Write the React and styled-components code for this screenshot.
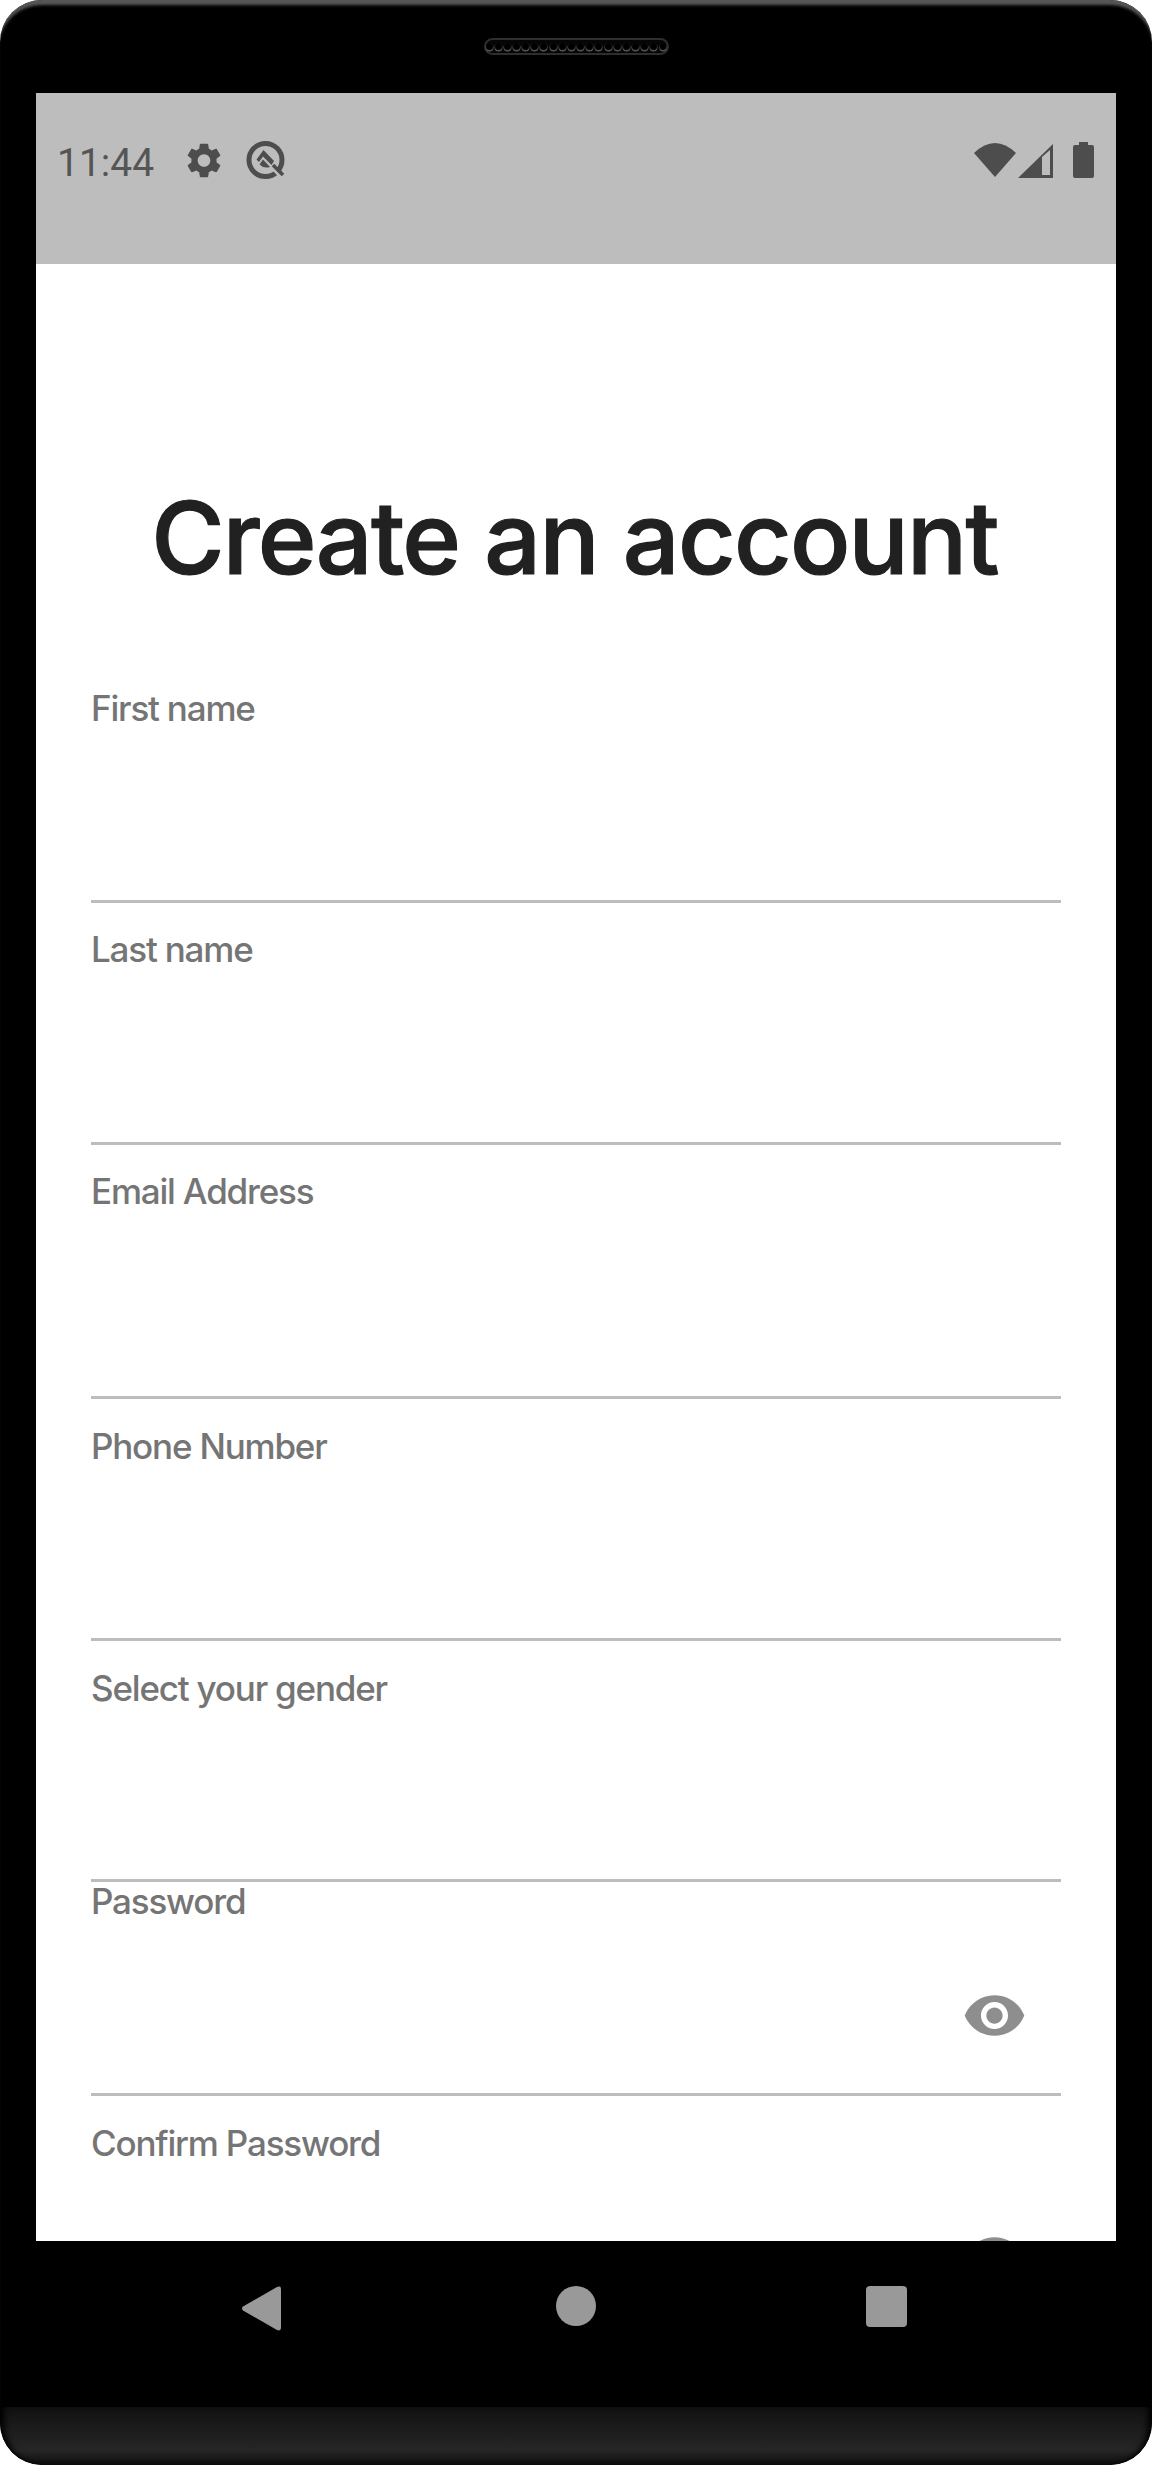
import React from 'react';
import styled, { createGlobalStyle } from 'styled-components';

const Global = createGlobalStyle`
  html, body { margin: 0; padding: 0; background: #fff; }
  #root { width: 1152px; height: 2465px; }
`;

const Device = styled.div`
  width: 1152px;
  height: 2465px;
  background: #000;
  border-radius: 42px;
  box-shadow: inset 0 7px 3px -2px #565656;
  display: flex;
  flex-direction: column;
  overflow: hidden;
`;
const TopBezel = styled.div`
  height: 93px;
  flex: none;
  display: flex;
  justify-content: center;
  padding-top: 38px;
  box-sizing: border-box;
`;
const Speaker = styled.div`
  width: 185px;
  height: 17px;
  box-sizing: border-box;
  border: 2px solid #2e2e2e;
  border-radius: 9px;
  background: #060606;
  display: flex;
  align-items: center;
  justify-content: center;
  gap: 2.2px;
`;
const SpeakerHole = styled.span`
  width: 7px;
  height: 7px;
  border-radius: 50%;
  background: #000;
  box-shadow: 0 1px 0 0.5px #555;
`;
const ScreenRow = styled.div`
  height: 2148px;
  flex: none;
  padding: 0 36px;
`;
const Screen = styled.div`
  height: 100%;
  background: #fff;
  overflow: hidden;
`;
const StatusBar = styled.div`
  height: 171px;
  background: #bdbdbd;
  display: flex;
  align-items: flex-start;
  padding: 47px 22px 0 21px;
  box-sizing: border-box;
  color: #4d4d4d;
`;
const Time = styled.span`
  font: 400 39px/46px Roboto, sans-serif;
  color: #555;
  width: 130px;
  flex: none;
`;
const Spacer = styled.div`
  flex: 1;
`;
const StatusIcon = styled.svg`
  display: block;
  flex: none;
  margin-left: ${p => p.$ml || 0}px;
  margin-top: ${p => p.$mt || 0}px;
  fill: #4d4d4d;
`;
const Content = styled.div`
  padding: 0 55px;
`;
const Title = styled.h1`
  margin: 0;
  padding: 214px 3px 63px 0;
  text-align: center;
  font: 500 100px/120px Inter, "Liberation Sans", sans-serif;
  letter-spacing: -1.7px;
  -webkit-text-stroke: 1.2px #212121;
  color: #212121;
  white-space: nowrap;
`;
const Field = styled.div`
  height: ${p => p.$h}px;
  border-bottom: 3px solid #bdbdbd;
  display: flex;
  flex-direction: column;
  padding-top: ${p => p.$pt}px;
  box-sizing: border-box;
`;
const Label = styled.label`
  font: 500 35px/38px Inter, "Liberation Sans", sans-serif;
  letter-spacing: -1.2px;
  color: #757575;
`;
const InputRow = styled.div`
  display: flex;
  flex: 1;
  align-items: center;
  justify-content: flex-end;
  padding: 18px 34px 0 0;
`;
const Eye = styled.svg`
  display: block;
  width: 65px;
  height: 65px;
  flex: none;
  fill: #8e8e8e;
`;
const NavBar = styled.div`
  height: 166px;
  flex: none;
  display: flex;
  align-items: flex-start;
  padding: 45px 0 0 242px;
  box-sizing: border-box;
`;
const NavIcon = styled.svg`
  display: block;
  flex: none;
  margin-left: ${p => p.$ml || 0}px;
  fill: #999;
`;
const Chin = styled.div`
  flex: 1;
  border-radius: 0 0 42px 42px;
  background: linear-gradient(#111 0%, #1c1c1c 40%, #262626 75%, #0c0c0c 100%);
  box-shadow: inset 8px 0 6px -4px #000, inset -8px 0 6px -4px #000;
`;

const eyePath = 'M12 4.5C7 4.5 2.73 7.61 1 12c1.73 4.39 6 7.5 11 7.5s9.27-3.11 11-7.5c-1.73-4.39-6-7.5-11-7.5zM12 17c-2.76 0-5-2.24-5-5s2.24-5 5-5 5 2.24 5 5-2.24 5-5 5zm0-8c-1.66 0-3 1.34-3 3s1.34 3 3 3 3-1.34 3-3-1.34-3-3-3z';
const EyeIcon = () => (
  <Eye viewBox="0 0 24 24"><path d={eyePath} /></Eye>
);

const fields = [
  { label: 'First name', h: 242, pt: 28 },
  { label: 'Last name', h: 242, pt: 27 },
  { label: 'Email Address', h: 254, pt: 27 },
  { label: 'Phone Number', h: 242, pt: 28 },
  { label: 'Select your gender', h: 241, pt: 28 },
  { label: 'Password', h: 214, pt: 0, eye: true },
  { label: 'Confirm Password', h: 242, pt: 28, eye: true },
];

export default function App() {
  return (
    <Device>
      <Global />
      <TopBezel>
        <Speaker>
          {Array.from({ length: 20 }, (_, i) => <SpeakerHole key={i} />)}
        </Speaker>
      </TopBezel>
      <ScreenRow>
        <Screen>
          <StatusBar>
            <Time>11:44</Time>
            <StatusIcon width="34" height="35" viewBox="2.6 2 18.8 20" $mt="3">
              <path d="M19.14 12.94c.04-.3.06-.61.06-.94 0-.32-.02-.64-.07-.94l2.03-1.58c.18-.14.23-.41.12-.61l-1.92-3.32c-.12-.22-.37-.29-.59-.22l-2.39.96c-.5-.38-1.03-.7-1.62-.94l-.36-2.54c-.04-.24-.24-.41-.48-.41h-3.84c-.24 0-.43.17-.47.41l-.36 2.54c-.59.24-1.13.57-1.62.94l-2.39-.96c-.22-.08-.47 0-.59.22L2.74 8.87c-.12.21-.08.47.12.61l2.03 1.58c-.05.3-.09.63-.09.94s.02.64.07.94l-2.03 1.58c-.18.14-.23.41-.12.61l1.92 3.32c.12.22.37.29.59.22l2.39-.96c.5.38 1.03.7 1.62.94l.36 2.54c.05.24.24.41.48.41h3.84c.24 0 .44-.17.47-.41l.36-2.54c.59-.24 1.13-.56 1.62-.94l2.39.96c.22.08.47 0 .59-.22l1.92-3.32c.12-.22.07-.47-.12-.61l-2.01-1.58zM12 15.6c-1.98 0-3.6-1.62-3.6-3.6s1.62-3.6 3.6-3.6 3.6 1.62 3.6 3.6-1.62 3.6-3.6 3.6z" />
            </StatusIcon>
            <StatusIcon width="39" height="38" viewBox="0 0 39 38" $ml="25" $mt="1">
              <circle cx="19.5" cy="19" r="16.5" fill="none" stroke="#4d4d4d" strokeWidth="5" />
              <path d="M17.5 9 L28 20 L25.500 24 L17 15.500 L13 21 L10.500 18.500Z" />
              <path d="M13.500 23.500 L17 18.500 L24 26 Q18 28 13.500 23.500Z" />
              <path d="M26 27 L37 38" stroke="#bdbdbd" strokeWidth="3" fill="none" />
              <path d="M27 24 L37 34" stroke="#4d4d4d" strokeWidth="3.500" fill="none" />
            </StatusIcon>
            <Spacer />
            <StatusIcon width="42" height="34" viewBox="0 0 42 34" $mt="3">
              <path d="M0 10Q21 -10 42 10L21 34Z" />
            </StatusIcon>
            <StatusIcon width="35" height="34" viewBox="0 0 35 34" $ml="2" $mt="4">
              <path fillRule="evenodd" d="M35 0V34H0ZM24 13V31H32V6Z" />
            </StatusIcon>
            <StatusIcon width="21" height="36" viewBox="0 0 21 36" $ml="20" $mt="2">
              <path d="M6 0H15V3H19A2 2 0 0 1 21 5V34A2 2 0 0 1 19 36H2A2 2 0 0 1 0 34V5A2 2 0 0 1 2 3H6Z" />
            </StatusIcon>
          </StatusBar>
          <Content>
            <Title>Create an account</Title>
            {fields.map(f => (
              <Field key={f.label} $h={f.h} $pt={f.pt}>
                <Label>{f.label}</Label>
                <InputRow>{f.eye && <EyeIcon />}</InputRow>
              </Field>
            ))}
          </Content>
        </Screen>
      </ScreenRow>
      <NavBar>
        <NavIcon width="39" height="45" viewBox="0 0 39 45">
          <path d="M1 20.500L35 1Q39 -.5 39 3V42Q39 45.500 35 44L1 24.500Q-1 22.500 1 20.500Z" />
        </NavIcon>
        <NavIcon width="40" height="40" viewBox="0 0 40 40" $ml="275">
          <circle cx="20" cy="20" r="20" />
        </NavIcon>
        <NavIcon width="41" height="41" viewBox="0 0 41 41" $ml="270">
          <rect width="41" height="41" rx="4" />
        </NavIcon>
      </NavBar>
      <Chin />
    </Device>
  );
}
